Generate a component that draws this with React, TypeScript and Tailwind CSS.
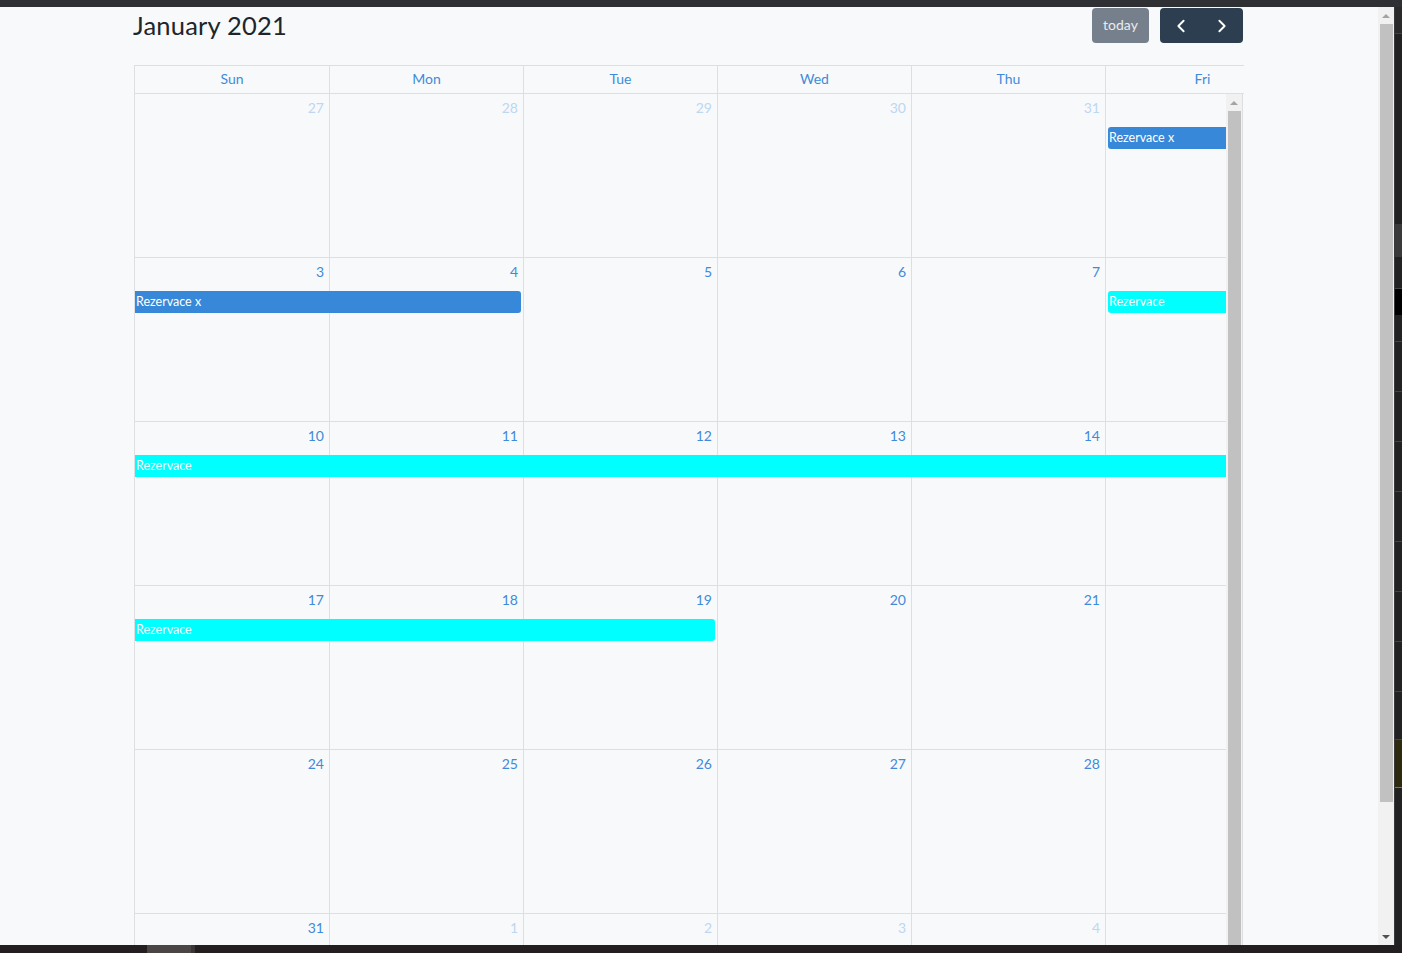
import React from "react";

type Ev = { start: number; span: number; color: "blue" | "cyan"; title: string; roundL: boolean; roundR: boolean };

const weeks: { days: { n: number; other: boolean }[]; events: Ev[] }[] = [
  {
    days: [27, 28, 29, 30, 31, 1, 2].map((n, i) => ({ n, other: i < 5 })),
    events: [{ start: 6, span: 2, color: "blue", title: "Rezervace x", roundL: true, roundR: false }],
  },
  {
    days: [3, 4, 5, 6, 7, 8, 9].map((n) => ({ n, other: false })),
    events: [
      { start: 1, span: 2, color: "blue", title: "Rezervace x", roundL: false, roundR: true },
      { start: 6, span: 2, color: "cyan", title: "Rezervace", roundL: true, roundR: false },
    ],
  },
  {
    days: [10, 11, 12, 13, 14, 15, 16].map((n) => ({ n, other: false })),
    events: [{ start: 1, span: 7, color: "cyan", title: "Rezervace", roundL: false, roundR: false }],
  },
  {
    days: [17, 18, 19, 20, 21, 22, 23].map((n) => ({ n, other: false })),
    events: [{ start: 1, span: 3, color: "cyan", title: "Rezervace", roundL: false, roundR: true }],
  },
  {
    days: [24, 25, 26, 27, 28, 29, 30].map((n) => ({ n, other: false })),
    events: [],
  },
  {
    days: [31, 1, 2, 3, 4, 5, 6].map((n, i) => ({ n, other: i > 0 })),
    events: [],
  },
];

const colStart = ["", "col-start-1", "col-start-2", "col-start-3", "col-start-4", "col-start-5", "col-start-6", "col-start-7"];
const colSpan = ["", "col-span-1", "col-span-2", "col-span-3", "col-span-4", "col-span-5", "col-span-6", "col-span-7"];
const cellCol = ["col-start-1", "col-start-2", "col-start-3", "col-start-4", "col-start-5", "col-start-6", "col-start-7"];

function Chevron({ dir }: { dir: "left" | "right" }) {
  return (
    <svg width="14" height="14" viewBox="0 0 16 16" fill="none">
      <path
        d={dir === "left" ? "M11 2 L5 8 L11 14" : "M5 2 L11 8 L5 14"}
        stroke="white"
        strokeWidth="2.2"
        strokeLinecap="round"
        strokeLinejoin="round"
      />
    </svg>
  );
}

function Week({ w }: { w: (typeof weeks)[number] }) {
  return (
    <div className="grid grid-cols-[196px_repeat(6,194px)] grid-rows-[33px_22px_109px] h-[164px]">
      {w.days.map((d, i) => (
        <div
          key={i}
          className={`${cellCol[i]} row-start-1 row-span-3 border-b border-r border-[#dddfe2] ${i === 0 ? "border-l" : ""} pr-[5px] pt-[5px] text-right text-[14px] leading-[18px] ${d.other ? "text-[#bcd7f2]" : "text-[#3f8bd9]"}`}
        >
          {i < 5 ? d.n : ""}
        </div>
      ))}
      {w.events.map((e, i) => (
        <div
          key={i}
          className={`${colStart[e.start]} ${colSpan[e.span]} row-start-2 z-10 flex items-center h-[22px] text-[12.5px] text-white px-[1px] overflow-hidden whitespace-nowrap ${
            e.color === "blue" ? "bg-[#3788d8]" : "bg-[#00ffff]"
          } ${e.roundL ? "rounded-l-[3px] ml-[2px]" : "ml-[1px]"} ${e.roundR ? "rounded-r-[3px] mr-[3px]" : ""}`}
        >
          {e.title}
        </div>
      ))}
    </div>
  );
}

export default function App() {
  const font = { fontFamily: "Lato, 'Open Sans', sans-serif" };
  return (
    <div className="w-[1402px] h-[953px] flex flex-col bg-[#232323] overflow-hidden" style={font}>
      <div className="h-[7px] bg-[#2f3034] shrink-0" />
      <div className="flex flex-1 min-h-0">
        {/* page */}
        <div className="w-[1378px] bg-[#f8f9fb] pl-[134px] flex flex-col overflow-hidden">
          <div className="flex items-start w-[1109px] h-[58px]">
            <div className="text-[25.5px] leading-[36px] text-[#212529] -ml-[1px] tracking-[0.2px]">January 2021</div>
            <div className="flex-1" />
            <div className="mt-[1px] h-[35px] w-[57px] rounded-[4px] bg-[#76808c] text-[#e9ecef] text-[14px] leading-[33px] text-center">
              today
            </div>
            <div className="ml-[11px] mt-[1px] h-[35px] w-[83px] rounded-[4px] bg-[#2c3e50] flex">
              <div className="flex-1 flex items-center justify-center">
                <Chevron dir="left" />
              </div>
              <div className="flex-1 flex items-center justify-center">
                <Chevron dir="right" />
              </div>
            </div>
          </div>
          {/* header */}
          <div className="w-[1110px] h-[29px] overflow-hidden border-t border-[#dddfe2] shrink-0">
            <div className="grid grid-cols-[196px_repeat(6,194px)] h-[28px]">
              {["Sun", "Mon", "Tue", "Wed", "Thu", "Fri", ""].map((d, i) => (
                <div
                  key={i}
                  className={`border-r border-b border-[#dddfe2] ${i === 0 ? "border-l" : ""} text-center text-[14px] leading-[26px] text-[#3f8bd9]`}
                >
                  {d}
                </div>
              ))}
            </div>
          </div>
          {/* body */}
          <div className="w-[1110px] flex flex-1 min-h-0">
            <div className="w-[1092px] overflow-hidden">
              <div className="w-[1362px]">
                {weeks.map((w, i) => (
                  <Week key={i} w={w} />
                ))}
              </div>
            </div>
            <div className="w-[17px] bg-[#f1f1f1] border-r border-[#dddfe2] flex flex-col items-center">
              <div className="h-[17px] flex items-center justify-center">
                <div className="w-0 h-0 border-l-[4px] border-r-[4px] border-b-[4px] border-l-transparent border-r-transparent border-b-[#a3a3a3]" />
              </div>
              <div className="w-[13px] flex-1 bg-[#c1c1c1]" />
            </div>
          </div>
        </div>
        {/* page scrollbar */}
        <div className="w-[16px] bg-[#f1f1f1] flex flex-col items-center">
          <div className="h-[17px] flex items-center justify-center">
            <div className="w-0 h-0 border-l-[4px] border-r-[4px] border-b-[4px] border-l-transparent border-r-transparent border-b-[#a3a3a3]" />
          </div>
          <div className="w-[13px] h-[778px] bg-[#c1c1c1]" />
          <div className="flex-1" />
          <div className="h-[17px] flex items-center justify-center">
            <div className="w-0 h-0 border-l-[4px] border-r-[4px] border-t-[4px] border-l-transparent border-r-transparent border-t-[#505050]" />
          </div>
        </div>
        {/* side dark panel */}
        <div className="flex-1 bg-[#222222] border-l border-[#3a3a3a] flex flex-col">
          <div className="h-[27px] bg-[#2a2a2a] border-b border-[#444]" />
          <div className="h-[190px]" />
          <div className="h-[33px] bg-[#3a3a3a]" />
          <div className="h-[32px] border-b border-[#444]" />
          <div className="h-[26px] bg-black" />
          <div className="h-[27px] border-b border-[#444]" />
          <div className="h-[50px] border-b border-[#444]" />
          <div className="h-[50px] border-b border-[#444]" />
          <div className="h-[50px] border-b border-[#444]" />
          <div className="h-[50px] border-b border-[#444]" />
          <div className="h-[50px] border-b border-[#444]" />
          <div className="h-[50px] border-b border-[#444]" />
          <div className="h-[50px] border-b border-[#444]" />
          <div className="h-[48px] border-b border-[#444]" />
          <div className="h-[48px] bg-[#2e2a10] border-b border-[#8a7a20]" />
          <div className="flex-1" />
        </div>
      </div>
      <div className="h-[8px] bg-[#231f20] shrink-0 flex">
        <div className="w-[147px]" />
        <div className="w-[44px] bg-[#4a4646]" />
        <div className="w-[4px] bg-[#3a3636]" />
      </div>
    </div>
  );
}
